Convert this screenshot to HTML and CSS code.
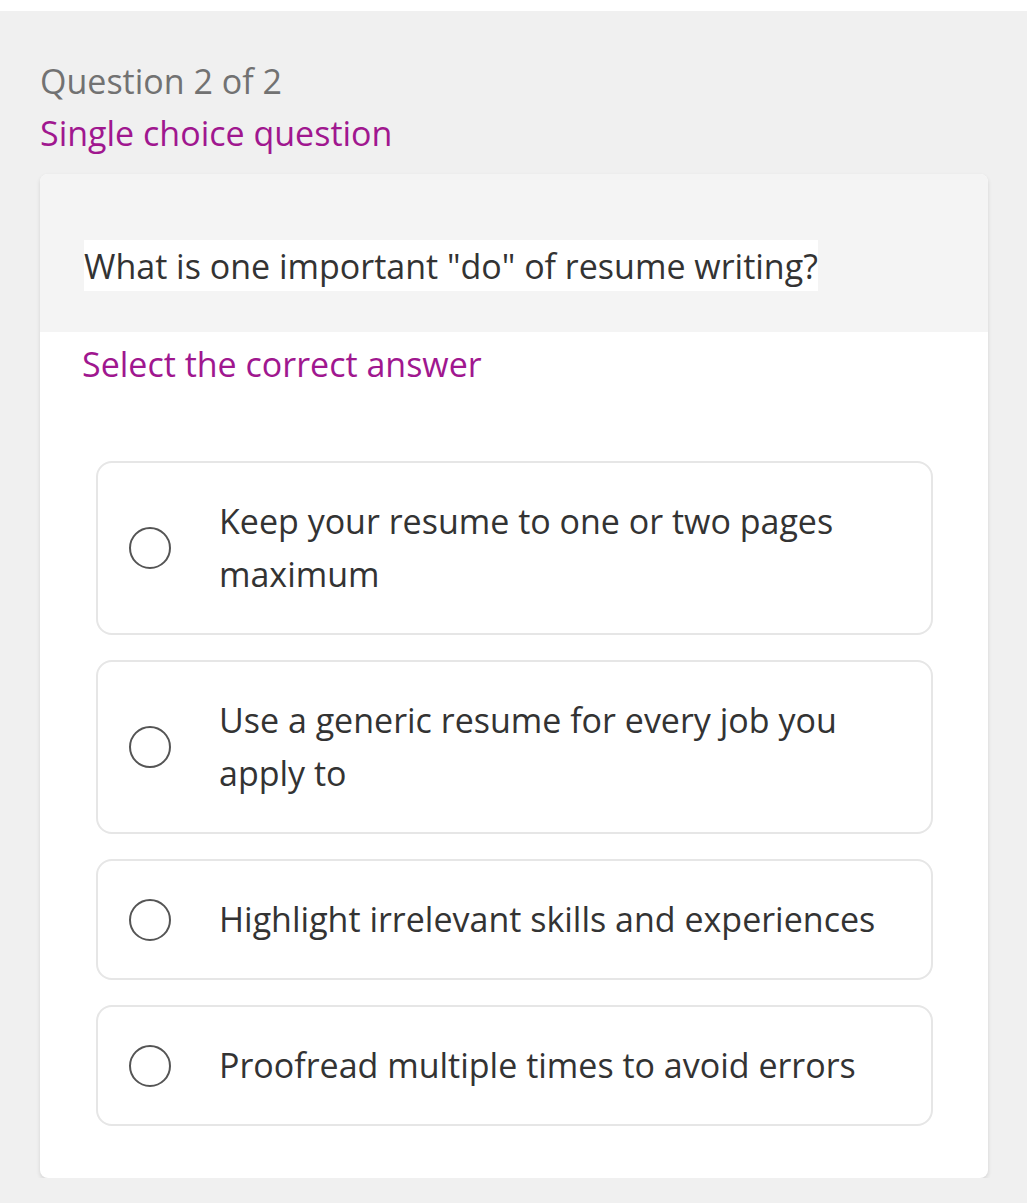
FILE: index.html
```html
<!DOCTYPE html>
<html lang="en">
  <head>
    <meta charset="UTF-8" />
    <title>Quiz</title>
    <link rel="stylesheet" href="styles.css">
  </head>

  <body>
    <div class="topbar"></div>
    <main>
      <p class="counter">Question 2 of 2</p>
      <p class="type">Single choice question</p>

      <section class="card">
        <div class="stem">
          <span class="stem-text">What is one important "do" of resume writing?</span>
        </div>
        <div class="body">
          <p class="hint">Select the correct answer</p>
          <ul class="options">
            <li class="option">
              <span class="radio"></span>
              <span class="label">Keep your resume to one or two pages maximum</span>
            </li>
            <li class="option">
              <span class="radio"></span>
              <span class="label">Use a generic resume for every job you apply to</span>
            </li>
            <li class="option">
              <span class="radio"></span>
              <span class="label">Highlight irrelevant skills and experiences</span>
            </li>
            <li class="option">
              <span class="radio"></span>
              <span class="label">Proofread multiple times to avoid errors</span>
            </li>
          </ul>
        </div>
      </section>
    </main>
  </body>
</html>
```

FILE: styles.css
```css
body {
  margin: 0;
  background-color: #f0f0f0;
  font-family: "Open Sans", "Noto Sans", sans-serif;
}

.topbar {
  height: 11px;
  background-color: #fff;
}

main {
  padding: 50px 39px 0 40px;
}

p {
  margin: 0;
}

.counter {
  font-size: 34px;
  line-height: 40px;
  color: #727272;
}

.type {
  font-size: 34px;
  line-height: 40px;
  margin-top: 12px;
  color: #a0178f;
}

.card {
  margin-top: 21px;
  background-color: #fff;
  border-radius: 8px;
  box-shadow: 0 2px 4px rgba(0, 0, 0, 0.12);
  overflow: hidden;
  height: 1004px;
}

.stem {
  background-color: #f4f4f4;
  height: 158px;
  padding: 66px 44px 0;
  box-sizing: border-box;
}

.stem-text {
  display: inline-block;
  background-color: #fff;
  font-size: 34px;
  line-height: 49px;
  padding-top: 2px;
  color: #333;
}

.body {
  padding: 12px 55px 0 42px;
}

.hint {
  font-size: 34px;
  line-height: 40px;
  color: #a0178f;
}

.options {
  list-style: none;
  margin: 77px 0 0 14px;
  padding: 0;
  display: flex;
  flex-direction: column;
  gap: 25px;
}

.option {
  display: flex;
  align-items: center;
  gap: 48px;
  border: 2px solid #e6e6e6;
  border-radius: 16px;
  padding: 32px 30px 32px 31px;
}

.radio {
  flex: none;
  width: 42px;
  height: 42px;
  border: 2px solid #555;
  border-radius: 50%;
  box-sizing: border-box;
}

.label {
  font-size: 34px;
  line-height: 53px;
  color: #333;
}
```
